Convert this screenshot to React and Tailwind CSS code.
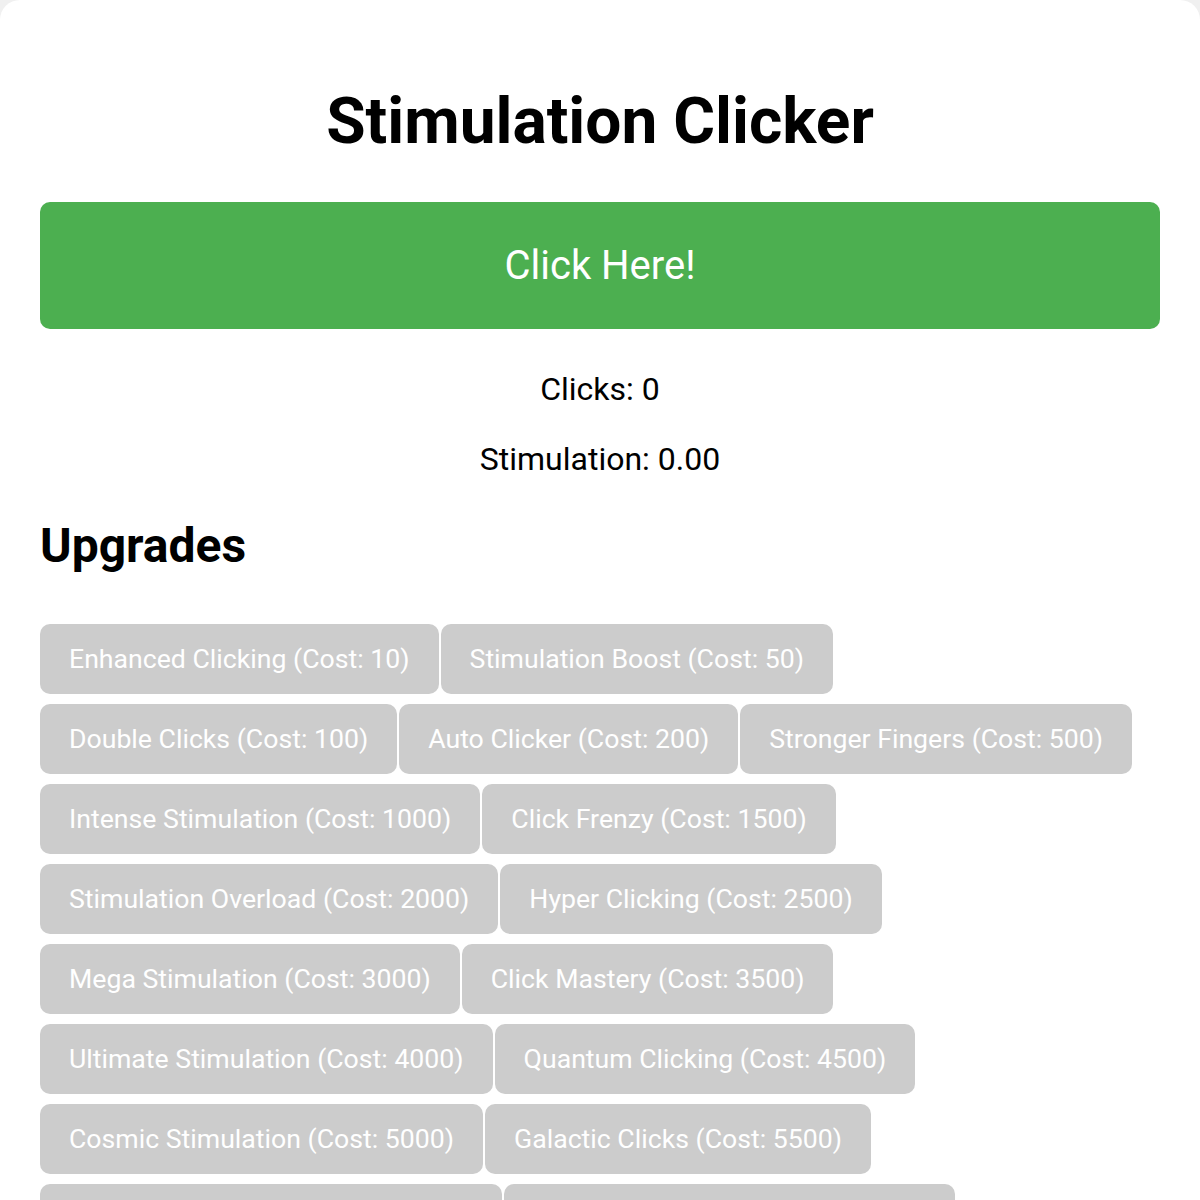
export default function App() {
  const upgrades = [
    ["Enhanced Clicking", 10],
    ["Stimulation Boost", 50],
    ["Double Clicks", 100],
    ["Auto Clicker", 200],
    ["Stronger Fingers", 500],
    ["Intense Stimulation", 1000],
    ["Click Frenzy", 1500],
    ["Stimulation Overload", 2000],
    ["Hyper Clicking", 2500],
    ["Mega Stimulation", 3000],
    ["Click Mastery", 3500],
    ["Ultimate Stimulation", 4000],
    ["Quantum Clicking", 4500],
    ["Cosmic Stimulation", 5000],
    ["Galactic Clicks", 5500],
    ["Universal Stimulation", 6000],
    ["Transcendent Clicks", 6500],
  ];
  return (
    <div className="min-h-screen bg-[#f0f0f0]" style={{ fontFamily: "Roboto, 'Noto Sans', sans-serif" }}>
      <div className="bg-white rounded-[20px] px-[40px] pb-[40px] min-h-[1400px]">
        <h1 className="text-center text-[64px] font-bold text-black leading-[75px] pt-[84px]">Stimulation Clicker</h1>
        <button className="mt-[43px] w-full bg-[#4caf50] text-white text-[40px] leading-[47px] py-[40px] rounded-[10px]">
          Click Here!
        </button>
        <p className="mt-[42px] text-center text-[32px] leading-[37px] text-black">Clicks: 0</p>
        <p className="mt-[33px] text-center text-[32px] leading-[37px] text-black">Stimulation: 0.00</p>
        <h2 className="mt-[40px] text-[48px] leading-[56px] font-bold text-black">Upgrades</h2>
        <div className="mt-[50px] flex flex-wrap gap-x-[2px] gap-y-[10px]">
          {upgrades.map(([name, cost]) => (
            <button
              key={name}
              className="h-[70px] px-[29px] bg-[#cccccc] text-white text-[26.67px] rounded-[10px] whitespace-nowrap"
            >
              {name} (Cost: {cost})
            </button>
          ))}
        </div>
      </div>
    </div>
  );
}
